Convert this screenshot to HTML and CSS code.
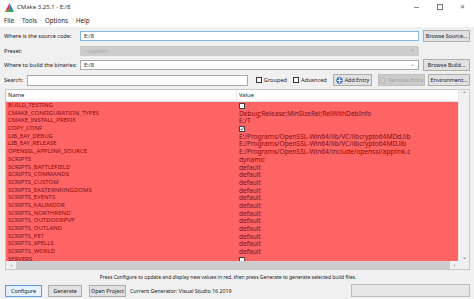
FILE: index.html
```html
<!DOCTYPE html>
<html lang="en">
<head>
    <meta charset="UTF-8">
    <title>CMake 3.25.1 - E:/8</title>
    <link rel="stylesheet" href="styles.css">
</head>
<body>
    <div class="window">
        <div class="titlebar">
            <svg class="logo" width="9" height="9" viewBox="0 0 10 10">
                <polygon points="5,0 0,10 5,7" fill="#d33"/>
                <polygon points="5,0 10,10 5,7" fill="#1e6fc8"/>
                <polygon points="0,10 10,10 5,7" fill="#3a3"/>
            </svg>
            <span class="title">CMake 3.25.1 - E:/8</span>
            <div class="controls">
                <span class="min"></span>
                <span class="max"></span>
                <span class="close">✕</span>
            </div>
        </div>
        <div class="menubar">
            <span>File</span><span>Tools</span><span>Options</span><span>Help</span>
        </div>

        <div class="form">
            <label>Where is the source code:</label>
            <div class="field focus">E:/8</div>
            <button class="btn">Browse Source...</button>

            <label>Preset:</label>
            <div class="field combo disabled">&lt;custom&gt;<span class="arrow">⌄</span></div>
            <div></div>

            <label>Where to build the binaries:</label>
            <div class="field combo">E:/8<span class="arrow">⌄</span></div>
            <button class="btn">Browse Build...</button>
        </div>

        <div class="searchbar">
            <label>Search:</label>
            <div class="field search"></div>
            <span class="check"><span class="box"></span>Grouped</span>
            <span class="check"><span class="box"></span>Advanced</span>
            <button class="btn icon-btn add">
                <svg width="7" height="7" viewBox="0 0 8 8">
                    <circle cx="4" cy="4" r="3.6" fill="#3b6fc4"/>
                    <path d="M4 1.5v5M1.5 4h5" stroke="#fff" stroke-width="1.4"/>
                </svg>Add Entry</button>
            <button class="btn icon-btn disabled remove">
                <svg width="7" height="7" viewBox="0 0 8 8">
                    <rect x="0.5" y="0.5" width="7" height="7" fill="#bdbdbd"/>
                    <path d="M2 2l4 4M6 2l-4 4" stroke="#e0e0e0" stroke-width="1"/>
                </svg>Remove Entry</button>
            <button class="btn env">Environment...</button>
        </div>

        <div class="table">
            <div class="table-body">
                <div class="cells">
                    <div class="row head"><span class="name">Name</span><span class="value">Value</span></div>
                    <div class="row"><span class="name">BUILD_TESTING</span><span class="value"><span class="cb"></span></span></div>
                    <div class="row"><span class="name">CMAKE_CONFIGURATION_TYPES</span><span class="value">Debug;Release;MinSizeRel;RelWithDebInfo</span></div>
                    <div class="row"><span class="name">CMAKE_INSTALL_PREFIX</span><span class="value">E:/T</span></div>
                    <div class="row"><span class="name">COPY_CONF</span><span class="value"><span class="cb on">✓</span></span></div>
                    <div class="row"><span class="name">LIB_EAY_DEBUG</span><span class="value">E:/Programs/OpenSSL-Win64/lib/VC/libcrypto64MDd.lib</span></div>
                    <div class="row"><span class="name">LIB_EAY_RELEASE</span><span class="value">E:/Programs/OpenSSL-Win64/lib/VC/libcrypto64MD.lib</span></div>
                    <div class="row"><span class="name">OPENSSL_APPLINK_SOURCE</span><span class="value">E:/Programs/OpenSSL-Win64/include/openssl/applink.c</span></div>
                    <div class="row"><span class="name">SCRIPTS</span><span class="value">dynamic</span></div>
                    <div class="row"><span class="name">SCRIPTS_BATTLEFIELD</span><span class="value">default</span></div>
                    <div class="row"><span class="name">SCRIPTS_COMMANDS</span><span class="value">default</span></div>
                    <div class="row"><span class="name">SCRIPTS_CUSTOM</span><span class="value">default</span></div>
                    <div class="row"><span class="name">SCRIPTS_EASTERNKINGDOMS</span><span class="value">default</span></div>
                    <div class="row"><span class="name">SCRIPTS_EVENTS</span><span class="value">default</span></div>
                    <div class="row"><span class="name">SCRIPTS_KALIMDOR</span><span class="value">default</span></div>
                    <div class="row"><span class="name">SCRIPTS_NORTHREND</span><span class="value">default</span></div>
                    <div class="row"><span class="name">SCRIPTS_OUTDOORPVP</span><span class="value">default</span></div>
                    <div class="row"><span class="name">SCRIPTS_OUTLAND</span><span class="value">default</span></div>
                    <div class="row"><span class="name">SCRIPTS_PET</span><span class="value">default</span></div>
                    <div class="row"><span class="name">SCRIPTS_SPELLS</span><span class="value">default</span></div>
                    <div class="row"><span class="name">SCRIPTS_WORLD</span><span class="value">default</span></div>
                    <div class="row"><span class="name">SERVERS</span><span class="value"><span class="cb"></span></span></div>
                </div>
                <div class="vscroll">
                    <span class="arr">⌃</span>
                    <span class="arr">⌄</span>
                </div>
            </div>
            <div class="hscroll">
                <div class="track"><span class="arr">‹</span><span class="arr">›</span></div>
                <div class="corner"></div>
            </div>
        </div>

        <div class="status">Press Configure to update and display new values in red, then press Generate to generate selected build files.</div>

        <div class="actions">
            <button class="btn default configure">Configure</button>
            <button class="btn generate">Generate</button>
            <button class="btn open">Open Project</button>
            <span class="generator">Current Generator: Visual Studio 16 2019</span>
            <div class="progress"></div>
        </div>
    </div>
</body>
</html>
```

FILE: styles.css
```css
body {
    margin: 0;
    font-family: "Noto Sans", "Open Sans", sans-serif;
    font-size: 5.6px;
    color: #222;
    overflow: hidden;
    background: #f0f0f0;
}

.window {
    width: 474px;
    height: 299px;
    display: flex;
    flex-direction: column;
}

.titlebar {
    height: 14px;
    display: flex;
    align-items: center;
    background: #fff;
    padding-left: 5px;
}

.titlebar .logo {
    margin-right: 3px;
}

.titlebar .title {
    font-size: 6px;
    color: #333;
}

.controls {
    margin-left: auto;
    display: flex;
    align-items: center;
    height: 100%;
}

.controls span {
    width: 23px;
    display: flex;
    justify-content: center;
    align-items: center;
    color: #555;
}

.controls .min::before {
    content: "";
    width: 5px;
    border-top: 1px solid #888;
}

.controls .max::before {
    content: "";
    width: 4px;
    height: 4px;
    border: 1px solid #777;
}

.controls .close {
    font-size: 6px;
}

.menubar {
    height: 13px;
    display: flex;
    align-items: center;
    background: #fff;
    padding-left: 4px;
    gap: 8px;
    font-size: 6.2px;
}

.form {
    display: grid;
    grid-template-columns: 72px 1fr 47px;
    grid-auto-rows: 12px;
    column-gap: 4px;
    row-gap: 2.5px;
    padding: 3px 4px 0 4px;
    align-items: center;
}

.form label {
    white-space: nowrap;
}

.field {
    height: 10px;
    box-sizing: border-box;
    background: #fff;
    border: 1px solid #a9a9a9;
    display: flex;
    align-items: center;
    padding-left: 3px;
    font-size: 5.6px;
}

.field.focus {
    border-color: #86b7e0;
}

.field.disabled {
    background: #cccccc;
    border-color: #cccccc;
    color: #a6a6a6;
}

.field .arrow {
    margin-left: auto;
    margin-right: 3px;
    color: #888;
    font-size: 6px;
    line-height: 6px;
    margin-top: -3px;
}

.btn {
    font-family: inherit;
    font-size: 5.4px;
    height: 12px;
    padding: 0;
    background: #e1e1e1;
    border: 1px solid #adadad;
    color: #222;
    white-space: nowrap;
    flex-shrink: 0;
}

.btn.default {
    border-color: #5e9be0;
    background: #e5f1fb;
}

.btn.disabled {
    background: #cccccc;
    border-color: #bfbfbf;
    color: #a0a0a0;
}

.icon-btn {
    display: flex;
    align-items: center;
    justify-content: center;
    gap: 2px;
}

.searchbar {
    display: flex;
    align-items: center;
    height: 12px;
    margin-top: 3px;
    padding: 0 4px;
}

.searchbar label {
    width: 23px;
    flex-shrink: 0;
}

.field.search {
    width: 221px;
    height: 11px;
    flex-shrink: 0;
    margin-right: 8px;
}

.check {
    display: flex;
    align-items: center;
    gap: 2px;
    flex-shrink: 0;
}

.check:nth-of-type(1) {
    width: 31px;
    margin-right: 6px;
}

.check:nth-of-type(2) {
    width: 34px;
    margin-right: 6px;
}

.check .box {
    width: 6px;
    height: 6px;
    box-sizing: border-box;
    border: 1px solid #333;
    background: #fff;
}

.btn.add {
    width: 39px;
    margin-right: 6px;
}

.btn.remove {
    width: 47px;
    margin-right: 3px;
}

.btn.env {
    width: 42px;
}

.table {
    margin: 3px 4px 0 5px;
    height: 181px;
    display: flex;
    flex-direction: column;
    border: 1px solid #c8c8c8;
    box-sizing: border-box;
    background: #fff;
}

.table-body {
    flex: 1;
    display: flex;
    min-height: 0;
}

.cells {
    flex: 1;
    overflow: hidden;
    background: #ff6464;
}

.row {
    display: grid;
    grid-template-columns: 230px 1fr;
    height: 7.7px;
    align-items: center;
    color: #860b0b;
    font-size: 6px;
    line-height: 7.7px;
    white-space: nowrap;
}

.row .name {
    padding-left: 2px;
}

.row .value {
    padding-left: 3px;
    display: flex;
    align-items: center;
    height: 100%;
    font-size: 6.6px;
}

.row.head {
    height: 11px;
    background: #fff;
    color: #222;
    font-size: 5.8px;
    border-bottom: 1px solid #e5e5e5;
}

.row.head .value {
    border-left: 1px solid #e5e5e5;
    padding-left: 2px;
    font-size: 5.8px;
}

.cb {
    width: 6px;
    height: 6px;
    box-sizing: border-box;
    border: 1px solid #444;
    background: #fff;
    display: flex;
    align-items: center;
    justify-content: center;
    font-size: 6px;
    line-height: 6px;
    color: #222;
}

.vscroll {
    width: 10px;
    background: #f0f0f0;
    border-left: 1px solid #e6e6e6;
    display: flex;
    flex-direction: column;
    justify-content: space-between;
    align-items: center;
}

.arr {
    font-size: 6px;
    color: #606060;
    line-height: 8px;
}

.hscroll {
    height: 8px;
    display: flex;
}

.hscroll .track {
    flex: 1;
    background: #cdcdcd;
    display: flex;
    justify-content: space-between;
    align-items: center;
    border-left: 1px solid #f0f0f0;
}

.hscroll .track .arr {
    background: #f0f0f0;
    width: 9px;
    text-align: center;
}

.hscroll .corner {
    width: 10px;
    background: #f0f0f0;
}

.status {
    height: 11px;
    display: flex;
    align-items: center;
    justify-content: center;
    margin-top: 1px;
    padding-right: 18px;
    font-size: 5px;
}

.actions {
    display: flex;
    align-items: center;
    padding: 0 4px 0 5px;
    margin-top: 2px;
}

.btn.configure {
    width: 37px;
    margin-right: 6px;
}

.btn.generate {
    width: 34px;
    margin-right: 7px;
}

.btn.open {
    width: 37px;
    margin-right: 4px;
}

.generator {
    font-size: 5.3px;
}

.progress {
    margin-left: auto;
    width: 117px;
    height: 11px;
    background: #e6e6e6;
    border: 1px solid #bcbcbc;
}
```
